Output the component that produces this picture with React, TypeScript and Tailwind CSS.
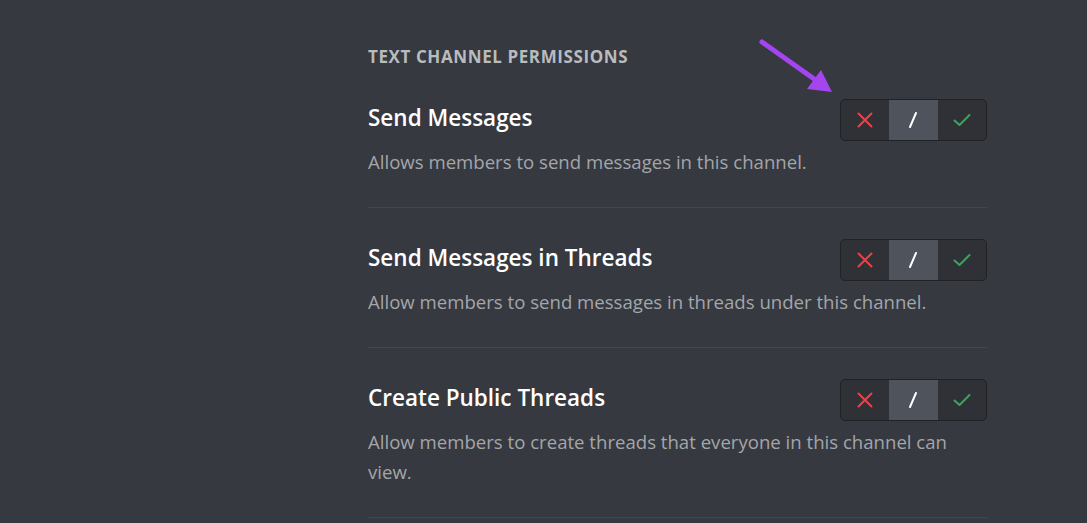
const rows = [
  {
    title: 'Send Messages',
    desc: 'Allows members to send messages in this channel.',
  },
  {
    title: 'Send Messages in Threads',
    desc: 'Allow members to send messages in threads under this channel.',
  },
  {
    title: 'Create Public Threads',
    desc: 'Allow members to create threads that everyone in this channel can view.',
  },
];

function PermissionToggle() {
  return (
    <div className="flex h-[42px] w-[147px] shrink-0 overflow-hidden rounded-[5px] border border-[#202225] bg-[#2f3136]">
      <div className="flex flex-1 items-center justify-center">
        <svg width="18" height="18" viewBox="0 0 18 18" fill="none">
          <path d="M2.5 2.5 L15.5 15.5 M15.5 2.5 L2.5 15.5" stroke="#ed4245" strokeWidth="2" strokeLinecap="round" />
        </svg>
      </div>
      <div className="flex flex-1 items-center justify-center bg-[#4f545c]">
        <svg width="18" height="18" viewBox="0 0 18 18" fill="none">
          <path d="M12 2 L6 16" stroke="#ffffff" strokeWidth="2" strokeLinecap="round" />
        </svg>
      </div>
      <div className="flex flex-1 items-center justify-center">
        <svg width="20" height="18" viewBox="0 0 20 18" fill="none">
          <path d="M2.5 9.5 L7.5 14 L17.5 4" stroke="#3ba55c" strokeWidth="2" strokeLinecap="round" strokeLinejoin="round" />
        </svg>
      </div>
    </div>
  );
}

export default function App() {
  return (
    <div className="relative h-[523px] w-full overflow-hidden bg-[#36393f] pl-[368px] pr-[100px] pt-[47px] font-['Open_Sans',sans-serif]">
      {/* Section header */}
      <h2 className="text-[17px] font-bold uppercase leading-[20px] tracking-[0.035em] text-[#b9bbbe]">
        Text Channel Permissions
      </h2>

      <div className="mt-[32px]">
        {rows.map((row, i) => (
          <div
            key={row.title}
            className={`border-b border-[#42454a] pb-[30px] ${i === 0 ? '' : 'pt-[31px]'}`}
          >
            <div className="flex h-[42px] items-center justify-between">
              <span className="-mt-[5px] text-[22.5px] font-semibold text-white">{row.title}</span>
              <PermissionToggle />
            </div>
            <p className="mt-[6px] pr-[30px] text-[18.6px] leading-[30px] text-[#a3a6aa]">{row.desc}</p>
          </div>
        ))}
      </div>

      {/* Annotation arrow */}
      <svg className="absolute left-[755px] top-[35px]" width="85" height="65" viewBox="0 0 85 65" fill="none">
        <path d="M7 7 L62 46" stroke="#a445f0" strokeWidth="5" strokeLinecap="round" />
        <path d="M77 57 L52 54 L66 35 Z" fill="#a445f0" />
      </svg>
    </div>
  );
}
